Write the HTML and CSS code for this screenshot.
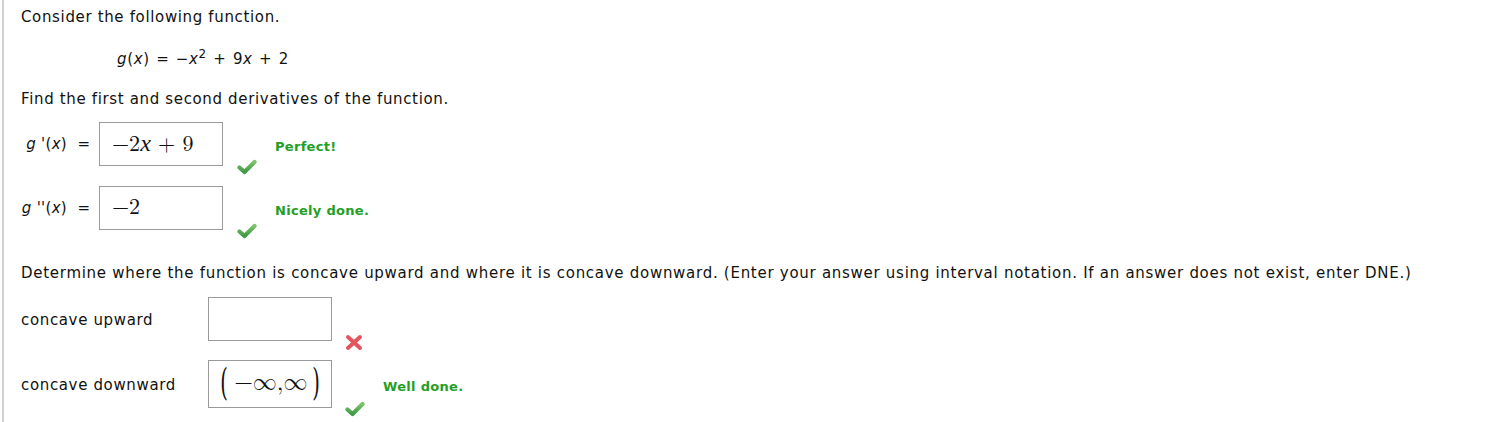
FILE: index.html
```html
<!DOCTYPE html>
<html>
<head>
<meta charset="utf-8">
<link rel="stylesheet" href="styles.css">
</head>
<body>
<div class="q">
  <p class="intro">Consider the following function.</p>
  <p class="func"><i>g</i>(<i>x</i>) = −<i>x</i><sup>2</sup> + 9<i>x</i> + 2</p>
  <p class="intro2">Find the first and second derivatives of the function.</p>

  <div class="deriv">
    <div class="dlabel"><i>g</i> '(<i>x</i>)</div>
    <div class="eq">=</div>
    <div class="box"><span class="math">−2<i>x</i> + 9</span></div>
    <div class="icon">
      <svg width="20" height="16" viewBox="0 0 20 16"><defs><linearGradient id="g1" x1="0" y1="0" x2="0" y2="1"><stop offset="0" stop-color="#7cc46a"/><stop offset="1" stop-color="#3e9a45"/></linearGradient></defs><path d="M2.5 8.5 L7.5 13 L17.5 3" fill="none" stroke="url(#g1)" stroke-width="4.2" stroke-linecap="round" stroke-linejoin="round"/></svg>
    </div>
    <div class="fb">Perfect!</div>

    <div class="dlabel"><i>g</i> ''(<i>x</i>)</div>
    <div class="eq">=</div>
    <div class="box"><span class="math">−2</span></div>
    <div class="icon">
      <svg width="20" height="16" viewBox="0 0 20 16"><defs><linearGradient id="g2" x1="0" y1="0" x2="0" y2="1"><stop offset="0" stop-color="#7cc46a"/><stop offset="1" stop-color="#3e9a45"/></linearGradient></defs><path d="M2.5 8.5 L7.5 13 L17.5 3" fill="none" stroke="url(#g2)" stroke-width="4.2" stroke-linecap="round" stroke-linejoin="round"/></svg>
    </div>
    <div class="fb">Nicely done.</div>
  </div>

  <p class="intro3">Determine where the function is concave upward and where it is concave downward. (Enter your answer using interval notation. If an answer does not exist, enter DNE.)</p>

  <div class="concave">
    <div class="clabel">concave upward</div>
    <div class="box cbox"></div>
    <div class="icon cicon">
      <svg width="18" height="17" viewBox="0 0 18 17"><path d="M3 3 L15 14 M15 3 L3 14" fill="none" stroke="#e5555d" stroke-width="4" stroke-linecap="round"/></svg>
    </div>
    <div class="fb"></div>

    <div class="clabel">concave downward</div>
    <div class="box cbox tall"><span class="math interval"><span class="paren">(</span><span class="ival">−∞,∞</span><span class="paren">)</span></span></div>
    <div class="icon cicon">
      <svg width="20" height="16" viewBox="0 0 20 16"><defs><linearGradient id="g3" x1="0" y1="0" x2="0" y2="1"><stop offset="0" stop-color="#7cc46a"/><stop offset="1" stop-color="#3e9a45"/></linearGradient></defs><path d="M2.5 8.5 L7.5 13 L17.5 3" fill="none" stroke="url(#g3)" stroke-width="4.2" stroke-linecap="round" stroke-linejoin="round"/></svg>
    </div>
    <div class="fb">Well done.</div>
  </div>
</div>
</body>
</html>
```

FILE: styles.css
```css
html, body {
  margin: 0;
  padding: 0;
  background: #fff;
}
body {
  font-family: Verdana, "DejaVu Sans", sans-serif;
  font-size: 15px;
  letter-spacing: 0.65px;
  color: #111;
}
.q {
  margin-left: 2px;
  border-left: 2px solid #d0d0d0;
  padding: 8px 0 14px 17px;
  min-height: 400px;
}
p {
  margin: 0;
  line-height: 18px;
}
.func {
  margin-top: 24px;
  padding-left: 96px;
  word-spacing: 1px;
}
.func sup {
  font-size: 12px;
  line-height: 0;
  vertical-align: 6px;
}
.intro2 {
  margin-top: 22px;
}
.deriv {
  margin-top: 14px;
  display: grid;
  grid-template-columns: 46px 32px 124px 52px auto;
  grid-auto-rows: 44px;
  row-gap: 20px;
  align-items: center;
}
.dlabel {
  text-align: right;
  white-space: nowrap;
  letter-spacing: 0.3px;
}
.eq {
  text-align: center;
  padding-left: 2px;
}
.box {
  box-sizing: border-box;
  height: 44px;
  border: 1px solid #9a9a9a;
  background: #fff;
  display: flex;
  align-items: center;
  padding-left: 12px;
  letter-spacing: 0;
}
.math {
  font-family: "Latin Modern Math", "DejaVu Serif", "Liberation Serif", serif;
  font-size: 22px;
  color: #111;
  letter-spacing: 0;
  margin-top: -2px;
}
.math i {
  font-family: "Liberation Serif", serif;
  font-size: 24px;
}
.icon {
  align-self: end;
  margin-bottom: -9px;
  padding-left: 14px;
  height: 16px;
}
.fb {
  color: #23a023;
  font-weight: bold;
  font-size: 13px;
  letter-spacing: 0.3px;
  white-space: nowrap;
  padding-top: 4px;
}
.intro3 {
  margin-top: 34px;
  letter-spacing: 0.72px;
}
.concave {
  margin-top: 15px;
  display: grid;
  grid-template-columns: 187px 124px 51px auto;
  grid-template-rows: 44px 48px;
  row-gap: 19px;
  align-items: center;
}
.clabel {
  padding-top: 2px;
}
.cbox {
  height: 44px;
}
.cbox.tall {
  height: 48px;
  padding-left: 10px;
}
.cicon {
  padding-left: 13px;
}
.interval {
  display: flex;
  align-items: center;
  font-size: 24px;
}
.ival {
  padding: 0 3px 0 5px;
}
.paren {
  display: inline-block;
  font-size: 26px;
  font-family: "DejaVu Serif", serif;
  font-weight: 300;
  line-height: 1;
  transform: scale(0.75, 1.45);
  position: relative;
  top: -1px;
}
```
